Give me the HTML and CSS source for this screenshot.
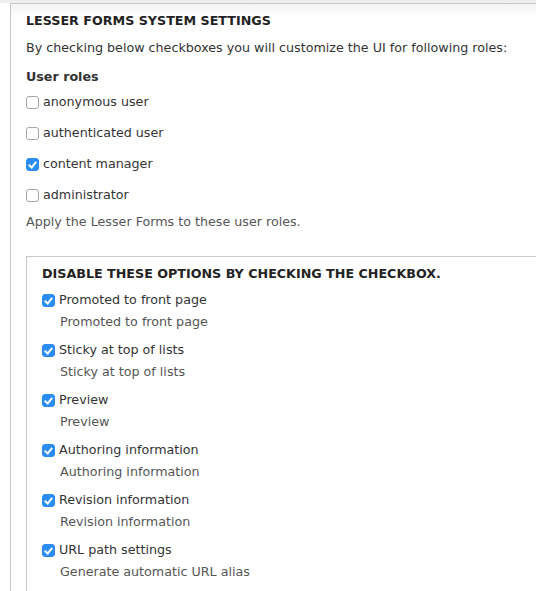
FILE: index.html
```html
<!DOCTYPE html>
<html lang="en">
<head>
    <meta charset="UTF-8">
    <meta name="viewport" content="width=device-width, initial-scale=1.0">
    <title>Lesser Forms System Settings</title>
    <link rel="stylesheet" href="styles.css">
</head>
<body>
    <div class="topbar"></div>
    <div class="settings">
        <h2 class="settings-title">LESSER FORMS SYSTEM SETTINGS</h2>
        <p class="intro">By checking below checkboxes you will customize the UI for following roles:</p>

        <h3 class="group-label">User roles</h3>
        <div class="roles">
            <label class="check"><span class="box"></span>anonymous user</label>
            <label class="check"><span class="box"></span>authenticated user</label>
            <label class="check"><span class="box checked"></span>content manager</label>
            <label class="check"><span class="box"></span>administrator</label>
        </div>
        <p class="help">Apply the Lesser Forms to these user roles.</p>

        <div class="options">
            <h3 class="options-title">DISABLE THESE OPTIONS BY CHECKING THE CHECKBOX.</h3>

            <div class="option">
                <label class="check"><span class="box checked"></span>Promoted to front page</label>
                <div class="option-desc">Promoted to front page</div>
            </div>
            <div class="option">
                <label class="check"><span class="box checked"></span>Sticky at top of lists</label>
                <div class="option-desc">Sticky at top of lists</div>
            </div>
            <div class="option">
                <label class="check"><span class="box checked"></span>Preview</label>
                <div class="option-desc">Preview</div>
            </div>
            <div class="option">
                <label class="check"><span class="box checked"></span>Authoring information</label>
                <div class="option-desc">Authoring information</div>
            </div>
            <div class="option">
                <label class="check"><span class="box checked"></span>Revision information</label>
                <div class="option-desc">Revision information</div>
            </div>
            <div class="option">
                <label class="check"><span class="box checked"></span>URL path settings</label>
                <div class="option-desc">Generate automatic URL alias</div>
            </div>
        </div>
    </div>
</body>
</html>
```

FILE: styles.css
```css
html, body {
    margin: 0;
    padding: 0;
    background: #fff;
    overflow: hidden;
}
body {
    font-family: "DejaVu Sans", Verdana, sans-serif;
    font-size: 12.7px;
    color: #333;
}
.topbar {
    height: 3px;
    background: #ededed;
}
.settings {
    margin: 0 -40px 0 10px;
    padding: 9px 15px 0 15px;
    border-top: 1px solid #c9c9c9;
    border-left: 1px solid #c9c9c9;
    background: linear-gradient(#f3f3f3, #fff 14px);
    min-height: 600px;
}
.settings-title {
    margin: 0;
    font-size: 12.7px;
    font-weight: bold;
    line-height: 16px;
    color: #222;
}
.intro {
    margin: 11px 0 0;
    line-height: 16px;
}
.group-label {
    margin: 13px 0 0;
    font-size: 12.7px;
    font-weight: bold;
    line-height: 16px;
}
.roles {
    display: flex;
    flex-direction: column;
    gap: 15px;
    margin-top: 9px;
}
.check {
    display: flex;
    align-items: center;
    line-height: 16px;
}
.box {
    width: 11px;
    height: 11px;
    border: 1px solid #a5a5a5;
    border-radius: 3px;
    margin-right: 4px;
    background: #fff;
    flex: none;
    position: relative;
}
.box.checked {
    border-color: #2b8df4;
    background: #2b8df4;
}
.box.checked::after {
    content: "";
    position: absolute;
    left: 3px;
    top: 1px;
    width: 3px;
    height: 6px;
    border: solid #fff;
    border-width: 0 2px 2px 0;
    transform: rotate(40deg);
}
.help {
    margin: 11px 0 0;
    line-height: 16px;
    color: #555;
}
.options {
    margin: 26px -40px 0 0;
    padding: 9px 15px 20px;
    border-top: 1px solid #c9c9c9;
    border-left: 1px solid #c9c9c9;
}
.options-title {
    margin: 0;
    font-size: 12.7px;
    font-weight: bold;
    line-height: 16px;
    color: #222;
}
.option {
    margin-top: 10px;
}
.option + .option {
    margin-top: 12px;
}
.option-desc {
    margin: 6px 0 0 18px;
    line-height: 16px;
    color: #555;
}
```
